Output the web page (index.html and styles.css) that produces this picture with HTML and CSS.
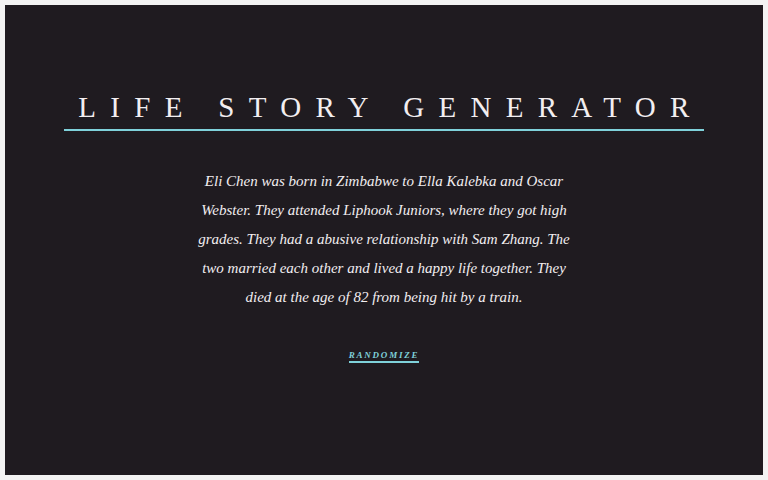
FILE: index.html
```html
<!DOCTYPE html>
<html lang="en">
<head>
    <meta charset="UTF-8">
    <title>Life Story Generator</title>
    <link rel="stylesheet" href="styles.css">
</head>
<body>
    <main class="app">
        <h1 class="title">Life Story Generator</h1>
        <p class="story" id="story">
            Eli Chen was born in Zimbabwe to Ella Kalebka and Oscar
            Webster. They attended Liphook Juniors, where they got high
            grades. They had a abusive relationship with Sam Zhang. The
            two married each other and lived a happy life together. They
            died at the age of 82 from being hit by a train.
        </p>
        <a href="#" class="randomize" id="randomize">Randomize</a>
    </main>
</body>
</html>
```

FILE: styles.css
```css
body {
    margin: 5px;
    background-color: #f3f3f3;
}
.app {
    height: 470px;
    box-sizing: border-box;
    padding-top: 82px;
    background-color: #1f1b20;
    color: #f2eef0;
    font-family: "Liberation Serif", serif;
    display: flex;
    flex-direction: column;
    align-items: center;
}
.title {
    margin: 0 59px;
    align-self: stretch;
    text-align: center;
    white-space: nowrap;
    font-weight: normal;
    font-size: 29px;
    line-height: 40px;
    letter-spacing: 14.3px;
    text-transform: uppercase;
    padding-left: 14px;
    padding-bottom: 2px;
    border-bottom: 2px solid #7fd1da;
}
.story {
    width: 380px;
    margin: 36px 0 0 0;
    text-align: center;
    font-style: italic;
    font-size: 15px;
    line-height: 29px;
}
.randomize {
    margin-top: 38px;
    color: #7fd1da;
    font-style: italic;
    font-weight: bold;
    font-size: 9px;
    letter-spacing: 1.8px;
    text-transform: uppercase;
    text-decoration: none;
    padding-bottom: 1px;
    border-bottom: 2px solid #7fd1da;
}
```
